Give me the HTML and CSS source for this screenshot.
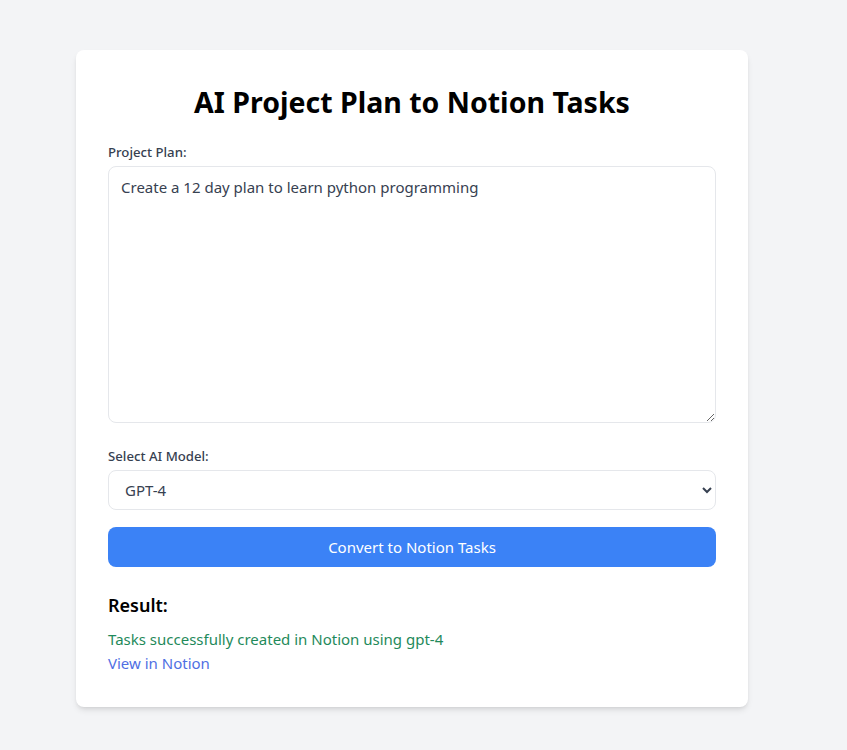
FILE: index.html
```html
<!DOCTYPE html>
<html lang="en">
<head>
    <meta charset="UTF-8">
    <meta name="viewport" content="width=device-width, initial-scale=1.0">
    <title>AI Project Plan to Notion Tasks</title>
    <link rel="stylesheet" href="styles.css">
</head>
<body>
    <div class="container">
        <h1>AI Project Plan to Notion Tasks</h1>
        <form id="plan-form">
            <div class="field">
                <label for="plan">Project Plan:</label>
                <textarea id="plan" rows="10">Create a 12 day plan to learn python programming</textarea>
            </div>
            <div class="field field-sm">
                <label for="model">Select AI Model:</label>
                <select id="model">
                    <option value="gpt-4">GPT-4</option>
                    <option value="gpt-3.5-turbo">GPT-3.5 Turbo</option>
                </select>
            </div>
            <button type="submit" id="convert">Convert to Notion Tasks</button>
        </form>
        <div class="result">
            <h2>Result:</h2>
            <p class="success">Tasks successfully created in Notion using gpt-4</p>
            <a href="#" class="notion-link">View in Notion</a>
        </div>
    </div>
</body>
</html>
```

FILE: styles.css
```css
body {
    font-family: "Noto Sans", "Open Sans", Arial, sans-serif;
    background-color: #f3f4f6;
    margin: 0;
    padding: 50px 0 40px 76px;
}
.container {
    width: 672px;
    box-sizing: border-box;
    background-color: white;
    padding: 32px;
    border-radius: 8px;
    box-shadow: 0 4px 6px -1px rgba(0, 0, 0, 0.1), 0 2px 4px -2px rgba(0, 0, 0, 0.1);
}
h1 {
    font-size: 28.5px;
    line-height: 36px;
    font-weight: 700;
    text-align: center;
    margin: 0 0 24px;
    padding-top: 2px;
    height: 34px;
    color: #000;
}
.field {
    margin-bottom: 23px;
}
.field-sm {
    margin-bottom: 17px;
}
label {
    display: block;
    font-size: 13.2px;
    line-height: 20px;
    font-weight: 500;
    color: #374151;
    margin-bottom: 4px;
}
textarea, select {
    display: block;
    width: 100%;
    box-sizing: border-box;
    font-family: inherit;
    font-size: 15px;
    color: #374151;
    background-color: white;
    border: 1px solid #e5e7eb;
    border-radius: 8px;
    outline: none;
}
textarea {
    height: 257px;
    padding: 8px 12px;
    line-height: 24px;
}
select {
    height: 40px;
    padding: 0 12px;
}
button {
    display: block;
    width: 100%;
    height: 40px;
    font-family: inherit;
    font-size: 15px;
    color: white;
    background-color: #3b82f6;
    border: none;
    border-radius: 8px;
    cursor: pointer;
}
button:hover {
    background-color: #2563eb;
}
.result {
    margin-top: 24px;
}
.result h2 {
    font-size: 18px;
    line-height: 28px;
    font-weight: 600;
    margin: 0 0 8px;
    color: #000;
}
.success {
    margin: 0;
    font-size: 15px;
    line-height: 24px;
    color: #1f8a5b;
}
.notion-link {
    display: block;
    font-size: 15px;
    line-height: 24px;
    color: #4f6fe3;
    text-decoration: none;
}
```
